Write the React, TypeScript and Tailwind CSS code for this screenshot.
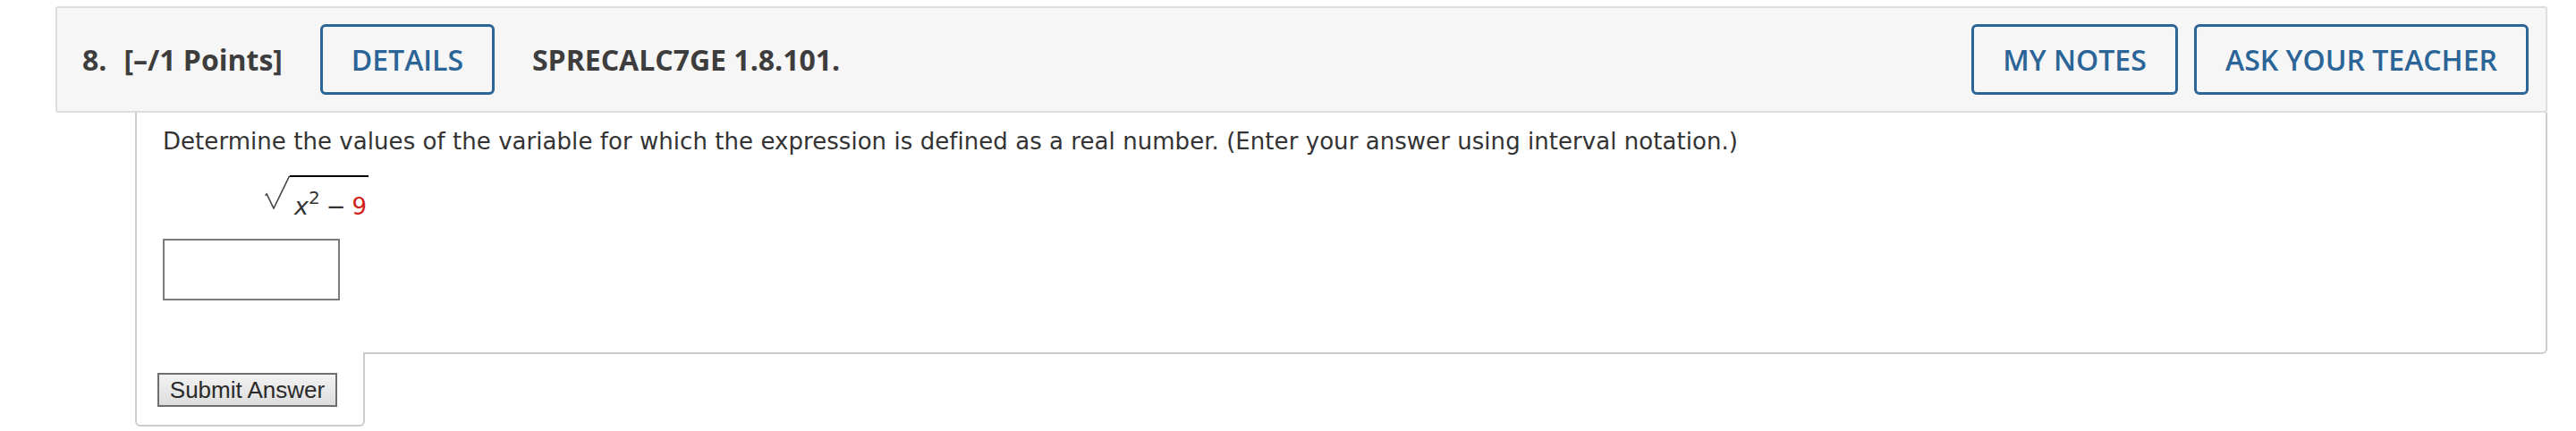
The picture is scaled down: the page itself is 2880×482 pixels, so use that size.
import React from "react";

const blueBtn =
  "h-[79px] rounded-[6px] border-[3px] border-[#2b6496] font-semibold text-[#2b6496] tracking-[0px]";

export default function App() {
  return (
    <div className="h-[482px] w-[2880px] bg-white pl-[62px] pr-[32px] pt-[7px]">
      {/* question header */}
      <div className="flex h-[119px] items-center rounded-[3px] border-2 border-[#dddddd] bg-[#f6f6f6] pl-[28px] pr-[19px] font-['Open_Sans',sans-serif] text-[32px] text-[#3d3d3d]">
        <span className="font-bold">8.</span>
        <span className="ml-[19px] font-bold">[–/1 Points]</span>
        <button className={`ml-[42px] w-[195px] ${blueBtn}`}>DETAILS</button>
        <span className="ml-[42px] font-bold">SPRECALC7GE 1.8.101.</span>
        <div className="ml-auto flex gap-[18px]">
          <button className={`w-[231px] ${blueBtn}`}>MY NOTES</button>
          <button className={`w-[374px] ${blueBtn}`}>ASK YOUR TEACHER</button>
        </div>
      </div>

      {/* question body */}
      <div className="ml-[89px]">
        <div className="h-[270px] rounded-br-[6px] border-x-2 border-b-2 border-[#cccccc] pl-[29px] pt-[17px] font-['DejaVu_Sans',Verdana,sans-serif] text-[#333333]">
          <p className="text-[26px] leading-[31px] tracking-[0.05px]">
            Determine the values of the variable for which the expression is defined as a real number. (Enter your answer using interval notation.)
          </p>
          <div className="ml-[114px] mt-[22px] flex h-[38px] items-start">
            <svg width="28" height="38" viewBox="0 0 28 38" className="shrink-0">
              <polyline
                points="0.5,22.8 2.2,21 10,37 27.6,0.8"
                fill="none"
                stroke="#444"
                strokeWidth="1.6"
                strokeLinejoin="miter"
              />
            </svg>
            <span className="whitespace-nowrap border-t-2 border-black pl-[5px] pr-[2px] pt-[10px] text-[26px] leading-[26px] text-[#333333]">
              <span className="text-[27px] italic">x</span>
              <span className="align-[12px] text-[20px]">2</span>
              <span className="mx-[7px]">−</span>
              <span className="text-[#d0201a]">9</span>
            </span>
          </div>
          <input
            type="text"
            className="mt-[33px] block h-[69px] w-[198px] border-2 border-[#7b7b7b] bg-white outline-none"
          />
        </div>
        <div className="-mt-[2px] h-[83px] w-[257px] rounded-b-[6px] border-x-2 border-b-2 border-[#cccccc] bg-white pl-[23px] pt-[23px]">
          <button className="h-[38px] w-[201px] border-2 border-[#6e6e6e] bg-linear-to-b from-[#f3f3f3] to-[#dddddd] font-['Liberation_Sans',Arial,sans-serif] text-[26px] leading-none text-[#2a2a2a]">
            Submit Answer
          </button>
        </div>
      </div>
    </div>
  );
}
